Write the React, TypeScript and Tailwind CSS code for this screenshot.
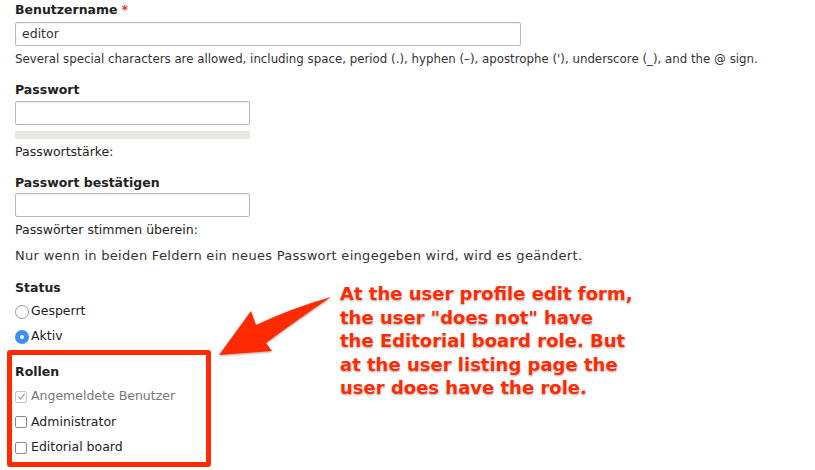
import React from 'react';

const font = { fontFamily: '"DejaVu Sans", "Noto Sans", sans-serif' };

function Label({ children, required }: { children: React.ReactNode; required?: boolean }) {
  return (
    <div className="text-[12.5px] font-bold text-[#222] leading-[18px]">
      {children}
      {required && <span className="ml-1 text-[#e0331b]">*</span>}
    </div>
  );
}

function TextInput({ value, width }: { value?: string; width: string }) {
  return (
    <div
      className={`${width} h-[24px] border border-[#b8b8b8] rounded-[2px] bg-white px-[6px] text-[12.5px] leading-[22px] text-[#333] shadow-[inset_0_1px_1px_rgba(0,0,0,0.06)]`}>
      {value}
    </div>
  );
}

function Radio({ checked, label }: { checked?: boolean; label: string }) {
  return (
    <div className="flex items-center h-[25px]">
      {checked ?
      <span className="w-[14px] h-[14px] rounded-full bg-[#3d8ef5] flex items-center justify-center">
          <span className="w-[4px] h-[4px] rounded-full bg-white" />
        </span> :

      <span className="w-[14px] h-[14px] rounded-full border border-[#9a9a9a] bg-white" />
      }
      <span className="ml-[2px] text-[12.5px] text-[#222]">{label}</span>
    </div>);

}

function Check({ label, disabled }: { label: string; disabled?: boolean }) {
  return (
    <div className="flex items-center h-[25.5px]">
      <span
        className={`w-[12px] h-[12px] rounded-[2px] border flex items-center justify-center bg-white ${disabled ? 'border-[#c4c4c4]' : 'border-[#8a8a8a]'}`}>
        {disabled &&
        <svg width="9" height="9" viewBox="0 0 10 10">
            <path d="M1.5 5.2 L4 7.6 L8.6 1.8" fill="none" stroke="#9a9a9a" strokeWidth="1.3" />
          </svg>
        }
      </span>
      <span className={`ml-[4px] text-[12.5px] ${disabled ? 'text-[#777]' : 'text-[#222]'}`}>{label}</span>
    </div>);

}

export default function App() {
  return (
    <div className="relative w-[815px] h-[470px] bg-white overflow-hidden" style={font}>
      <div className="pl-[15px] pt-[1px]">
        <Label required>Benutzername</Label>
        <div className="mt-[3px]">
          <TextInput value="editor" width="w-[506px]" />
        </div>
        <div className="mt-[5px] text-[11.8px] leading-[16px] text-[#333]">
          Several special characters are allowed, including space, period (.), hyphen (–), apostrophe ('), underscore (_), and the @ sign.
        </div>

        <div className="mt-[14px]">
          <Label>Passwort</Label>
        </div>
        <div className="mt-[2px]">
          <TextInput width="w-[235px]" />
        </div>
        <div className="mt-[6px] w-[235px] h-[8px] bg-[#e9e7e1]" />
        <div className="mt-[5px] text-[12.5px] leading-[16px] text-[#222]">Passwortstärke:</div>

        <div className="mt-[14px]">
          <Label>Passwort bestätigen</Label>
        </div>
        <div className="mt-[1px]">
          <TextInput width="w-[235px]" />
        </div>
        <div className="mt-[5px] text-[12.5px] leading-[16px] text-[#222]">Passwörter stimmen überein:</div>

        <div className="mt-[10px] text-[13px] tracking-[0.3px] leading-[16px] text-[#333]">
          Nur wenn in beiden Feldern ein neues Passwort eingegeben wird, wird es geändert.
        </div>

        <div className="mt-[15px]">
          <Label>Status</Label>
        </div>
        <div className="mt-[2px]">
          <Radio label="Gesperrt" />
          <Radio checked label="Aktiv" />
        </div>
      </div>

      <div className="ml-[7px] mt-[1px] w-[204px] h-[117px] border-[5px] border-[#ff2a00] rounded-[3px] pl-[3px] pt-[8px]">
        <Label>Rollen</Label>
        <div className="mt-[3px]">
          <Check disabled label="Angemeldete Benutzer" />
          <Check label="Administrator" />
          <Check label="Editorial board" />
        </div>
      </div>

      <svg className="absolute left-0 top-0" width="815" height="470" viewBox="0 0 815 470">
        <defs>
          <filter id="sh" x="-20%" y="-20%" width="140%" height="140%">
            <feDropShadow dx="0" dy="1" stdDeviation="1" floodColor="#000" floodOpacity="0.35" />
          </filter>
        </defs>
        <path
          d="M219 355 L251 311 L256 325 Q292 308 331 297 Q300 318 266 343 L272 351 Z"
          fill="#ff2a00"
          filter="url(#sh)" />
      </svg>

      <div
        className="absolute left-[340px] top-[282px] text-[18px] font-bold leading-[23.5px] text-[#ff2a00]"
        style={{
          fontFamily: '"DejaVu Sans", "Liberation Sans", sans-serif',
          textShadow: '0 0 2px #fff, 0 1px 2px rgba(0,0,0,0.45)'
        }}>
        At the user profile edit form,
        <br />
        the user "does not" have
        <br />
        the Editorial board role. But
        <br />
        at the user listing page the
        <br />
        user does have the role.
      </div>
    </div>);

}
